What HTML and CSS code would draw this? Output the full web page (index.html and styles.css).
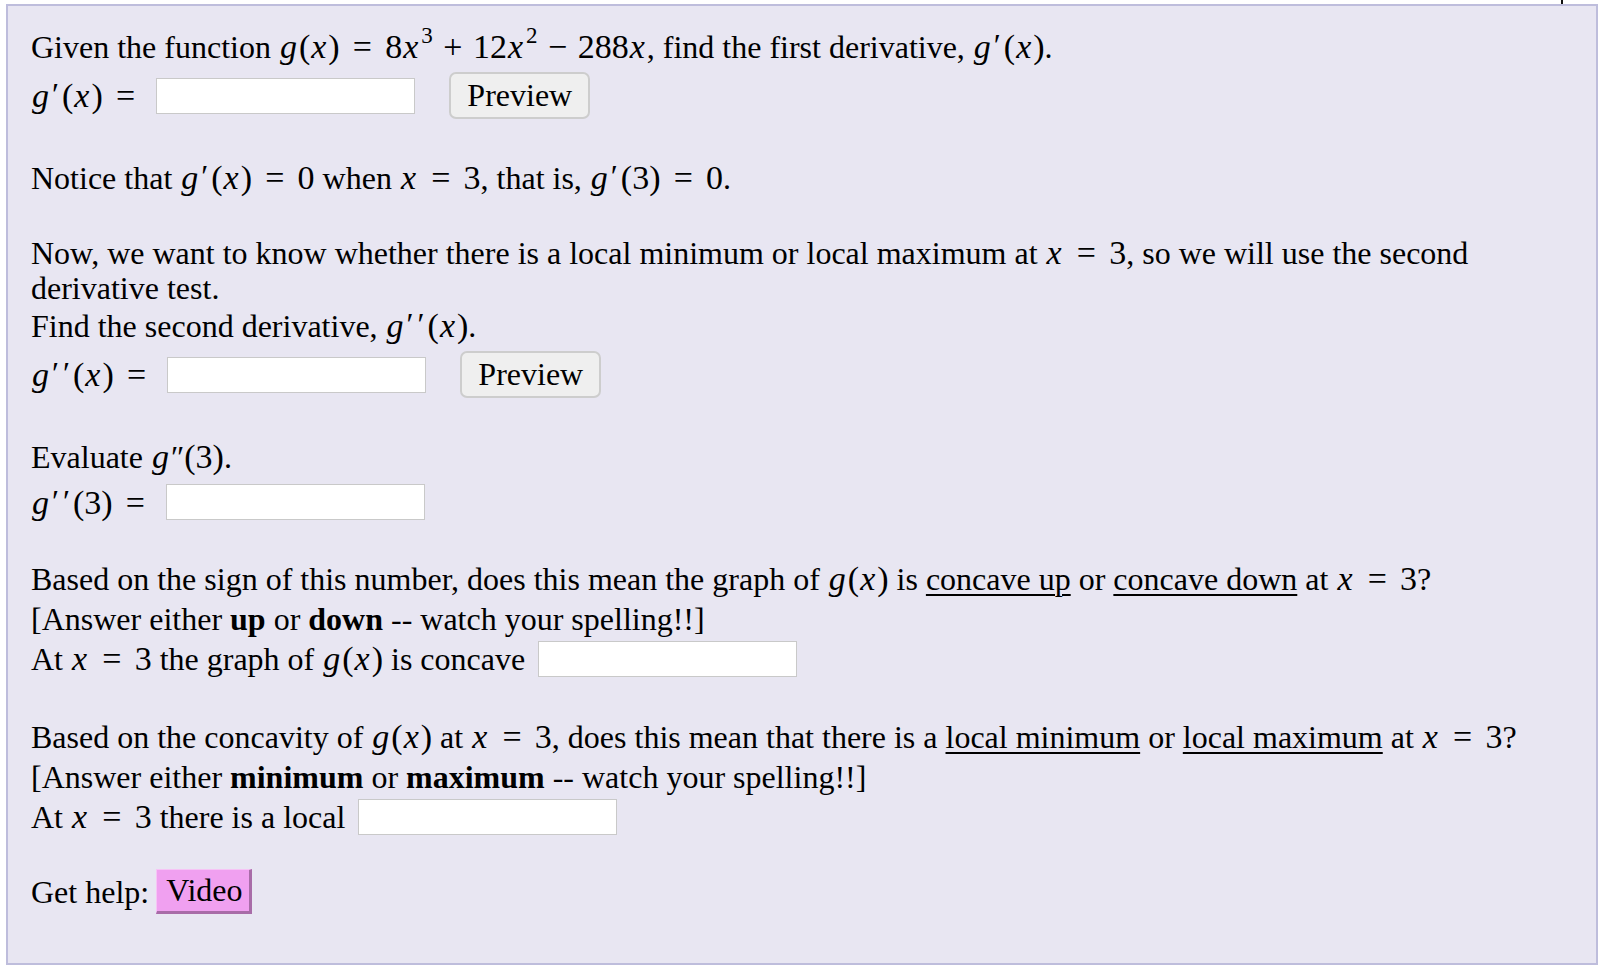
FILE: index.html
```html
<!DOCTYPE html>
<html>
<head>
<meta charset="utf-8">
<title>Second derivative test</title>
<link rel="stylesheet" href="styles.css">
</head>
<body>
<div class="mark"></div>
<div class="problem">
  <div class="ln first">Given the function <span class="m"><i>g</i>(<i>x</i>)<span class="rel">=</span>8<i>x</i><sup>3</sup><span class="bin">+</span>12<i>x</i><sup>2</sup><span class="bin">−</span>288<i>x</i></span>, find the first derivative, <span class="m"><i>g</i><span class="pr">′</span>(<i>x</i>)</span>.</div>
  <div class="row btnrow gap-tight"><span class="m label"><i>g</i><span class="pr">′</span>(<i>x</i>)<span class="rel">=</span></span><input class="ans" type="text"><button class="preview" type="button">Preview</button></div>

  <div class="ln gap-para">Notice that <span class="m"><i>g</i><span class="pr">′</span>(<i>x</i>)<span class="rel">=</span>0</span> when <span class="m"><i>x</i><span class="rel">=</span>3</span>, that is, <span class="m"><i>g</i><span class="pr">′</span>(3)<span class="rel">=</span>0</span>.</div>

  <div class="ln ln-short gap-para2">Now, we want to know whether there is a local minimum or local maximum at <span class="m"><i>x</i><span class="rel">=</span>3</span>, so we will use the second</div>
  <div class="ln ln-short">derivative test.</div>
  <div class="ln">Find the second derivative, <span class="m"><i>g</i><span class="pr">′</span><span class="pr">′</span>(<i>x</i>)</span>.</div>
  <div class="row btnrow gap-tight"><span class="m label"><i>g</i><span class="pr">′</span><span class="pr">′</span>(<i>x</i>)<span class="rel">=</span></span><input class="ans" type="text"><button class="preview" type="button">Preview</button></div>

  <div class="ln gap-para5">Evaluate <span class="m"><i>g</i><span class="dpr">″</span>(3)</span>.</div>
  <div class="row inrow gap-tight2"><span class="m label"><i>g</i><span class="pr">′</span><span class="pr">′</span>(3)<span class="rel">=</span></span><input class="ans" type="text"></div>

  <div class="ln gap-para3">Based on the sign of this number, does this mean the graph of <span class="m"><i>g</i>(<i>x</i>)</span> is <u>concave up</u> or <u>concave down</u> at <span class="m"><i>x</i><span class="rel">=</span>3</span>?</div>
  <div class="ln">[Answer either <b>up</b> or <b>down</b> -- watch your spelling!!]</div>
  <div class="ln row">At&nbsp;<span class="m"><i>x</i><span class="rel">=</span>3</span>&nbsp;the graph of&nbsp;<span class="m"><i>g</i>(<i>x</i>)</span>&nbsp;is concave<input class="ans after" type="text"></div>

  <div class="ln gap-para4">Based on the concavity of <span class="m"><i>g</i>(<i>x</i>)</span> at <span class="m"><i>x</i><span class="rel">=</span>3</span>, does this mean that there is a <u>local minimum</u> or <u>local maximum</u> at <span class="m"><i>x</i><span class="rel">=</span>3</span>?</div>
  <div class="ln">[Answer either <b>minimum</b> or <b>maximum</b> -- watch your spelling!!]</div>
  <div class="ln row">At&nbsp;<span class="m"><i>x</i><span class="rel">=</span>3</span>&nbsp;there is a local<input class="ans after" type="text"></div>

  <div class="row helprow gap-help"><span class="label">Get help:</span><span class="video">Video</span></div>
</div>
</body>
</html>
```

FILE: styles.css
```css
html, body {
  margin: 0;
  padding: 0;
  background: #ffffff;
}

body {
  font-family: "Liberation Serif", "Times New Roman", serif;
  font-size: 32px;
  color: #000;
  position: relative;
  width: 1618px;
  height: 966px;
  overflow: hidden;
}

.mark {
  position: absolute;
  left: 1561px;
  top: 0;
  width: 2px;
  height: 4px;
  background: #111;
}

.problem {
  box-sizing: border-box;
  width: 1592px;
  margin: 4px 0 0 6px;
  border: 2px solid #bebddc;
  background: #e8e6f2;
  padding: 21px 0 49px 23px;
  display: flex;
  flex-direction: column;
  align-items: flex-start;
}

.ln {
  line-height: 40px;
  height: 40px;
  white-space: nowrap;
}

.ln-short {
  line-height: 35px;
  height: 35px;
}

.row {
  display: flex;
  align-items: center;
  white-space: nowrap;
}

.btnrow { height: 47px; }
.inrow { height: 36px; }
.helprow { height: 45px; }

.label {
  line-height: 40px;
}

.gap-tight { margin-top: 5px; }
.gap-tight2 { margin-top: 7px; }
.gap-para { margin-top: 39px; }
.gap-para2 { margin-top: 38px; }
.gap-para5 { margin-top: 39px; }
.gap-para3 { margin-top: 39px; }
.gap-para4 { margin-top: 38px; }
.gap-help { margin-top: 32px; }

/* math */
.m {
  font-family: "Liberation Serif", "Times New Roman", serif;
  font-size: 34px;
  line-height: 1;
}

.m i {
  font-style: italic;
  padding: 0 2px 0 1px;
}

.m sup {
  font-size: 23px;
  line-height: 0;
  vertical-align: 15px;
  margin-left: 1px;
}

.rel {
  display: inline-block;
  width: 0.78em;
  text-align: center;
  margin: 0 0.28em;
}

.bin {
  display: inline-block;
  width: 0.78em;
  text-align: center;
  margin: 0 0.2em;
}

.pr {
  display: inline-block;
  font-size: 32px;
  vertical-align: 2px;
  margin: 0 3px 0 1px;
}

.dpr {
  font-size: 32px;
}

u {
  text-decoration: underline;
  text-decoration-thickness: 2px;
  text-underline-offset: 4px;
}

b {
  font-weight: bold;
}

.ans {
  box-sizing: border-box;
  width: 259px;
  height: 36px;
  margin: 0 0 0 8px;
  padding: 0;
  border: 1px solid #c9c9c9;
  background: #fff;
  font: 20px "Liberation Sans", sans-serif;
}

.ans.after {
  margin-left: 13px;
}

.preview {
  box-sizing: border-box;
  width: 141px;
  height: 47px;
  margin: 0 0 0 34px;
  padding: 0;
  border: 2px solid #cdcdcd;
  border-radius: 7px;
  background: #efefef;
  font-family: "Liberation Serif", "Times New Roman", serif;
  font-size: 32px;
  color: #000;
}

.video {
  box-sizing: border-box;
  display: inline-block;
  height: 45px;
  line-height: 40px;
  margin-left: 7px;
  padding: 0 7px 0 9px;
  background: #f0a0f0;
  border-style: solid;
  border-width: 1px 3px 3px 1px;
  border-color: #f6c4f6 #a86ca8 #a86ca8 #f6c4f6;
}
```
